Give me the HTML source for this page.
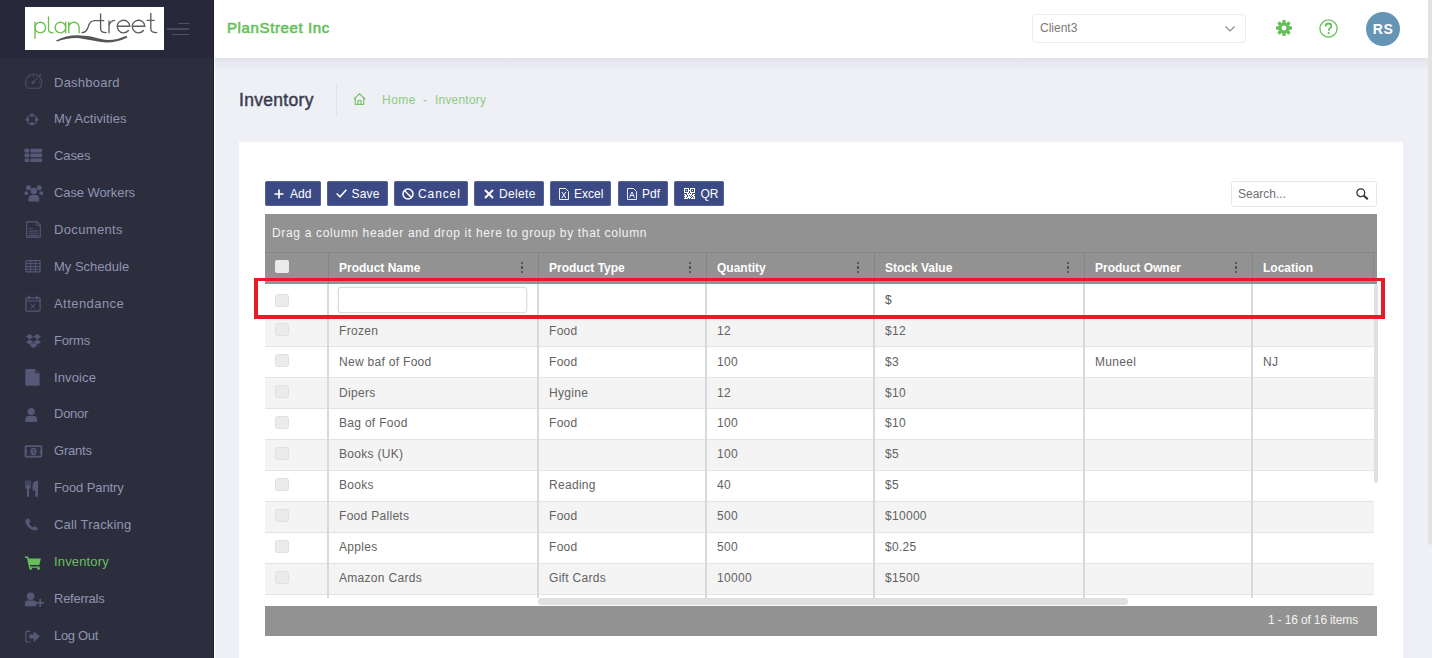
<!DOCTYPE html>
<html><head><meta charset="utf-8">
<style>
*{margin:0;padding:0;box-sizing:border-box}
html,body{width:1432px;height:658px;overflow:hidden;font-family:"Liberation Sans",sans-serif}
body{background:#eff0f6;position:relative}
.abs{position:absolute}
.logo{left:25px;top:7px;width:139px;height:43px;background:#fff}
.mi{position:absolute;left:54px;font-size:13px;white-space:nowrap;line-height:16px}
.ic{position:absolute;line-height:0}
.ic svg{display:block}
.btn{position:absolute;top:181px;height:25px;background:#3b4a84;border-radius:2.5px;box-shadow:inset 0 0 0 1px #55629a;color:#fff;font-size:12px;line-height:25px;white-space:nowrap}
.btn span{position:absolute;top:1px}
</style></head><body>
<div class="abs" style="left:0;top:0;width:214px;height:658px;background:#2c2e3e"></div>
<div class="abs" style="left:0;top:0;width:214px;height:58px;background:#27293a"></div>
<div class="abs" style="left:213px;top:0;width:1px;height:658px;background:#1d1e2b"></div>
<div class="abs logo"></div>
<svg class="abs" style="left:0;top:0" width="170" height="58" viewBox="0 0 170 58">
<g fill="none" stroke="#6abf4b" stroke-width="1.35" stroke-linecap="round">
<path d="M35 22.2 V38.3"/><circle cx="40.3" cy="27.5" r="5.3"/>
<path d="M48.5 17 V29.5 Q48.5 32.8 53.2 32.8"/>
<circle cx="60.4" cy="27.5" r="5.3"/><path d="M65.7 22.2 V32.8"/>
<path d="M68.7 22.2 V32.8 M68.7 27.4 A5.2 5.2 0 0 1 79.1 27.4 V32.8"/>
</g>
<g fill="none" stroke="#5c5c5c" stroke-width="1.35" stroke-linecap="round">
<path d="M82 32.6 C86.5 32.5 87.5 29 88.3 26.5 C89.3 22.5 91 20.6 95 20.6 L103.8 20.6"/>
<path d="M100.6 13.8 V29 Q100.6 32.6 106.2 32.6"/>
<path d="M109 20.8 V32.8 M109 26 Q110 20.6 114.5 20.4"/>
<path d="M117.2 26.2 H129.8 A6.3 6.3 0 1 0 128.4 30.5"/>
<path d="M132.2 26.2 H144.8 A6.3 6.3 0 1 0 143.4 30.5"/>
<path d="M150.8 13.5 V29 Q150.8 32.6 156.7 32.6 M147.2 20.4 H154.1"/>
</g>
<path d="M56 40.6 Q66 35.2 78 35.3 Q90 35.6 101 39.1 Q113 41.9 126.4 35.8 L127.4 37.4 Q114 43.9 101 42.1 Q90 39.7 78 37.9 Q66 37.7 57.2 41.4 Z" fill="#555"/>
</svg>
<svg class="abs" style="left:167px;top:23px" width="23" height="13" viewBox="0 0 23 13"><g stroke="#4e5169"><line x1="11" y1="0.5" x2="22" y2="0.5" stroke-width="1"/><line x1="0" y1="6" x2="22" y2="6" stroke-width="1.7"/><line x1="5" y1="11.5" x2="22" y2="11.5" stroke-width="1"/></g></svg>

<svg class="abs" style="left:0;top:0" width="214" height="658" viewBox="0 0 214 658">
<g fill="none" stroke="#4a4e6a" stroke-width="1.1">
 <path d="M27.6 88.3 A8.2 8.2 0 1 1 39.4 88.3 Z"/>
 <path d="M33.5 76 V77.6 M26.6 82 H28.2 M38.8 82 H40.4 M28.6 77.1 L29.6 78.1" stroke-width="1"/>
 <path d="M33.3 82.3 L37.3 77.8" stroke-width="1.1"/>
 <path d="M38.6 76.6 L41.2 74" stroke-width="1.1"/>
</g>
<circle cx="33.2" cy="82.4" r="1.2" fill="none" stroke="#555977" stroke-width="1"/>
<!-- My Activities -->
<circle cx="32" cy="119.6" r="4.9" fill="none" stroke="#555977" stroke-width="1.1"/>
<g fill="#555977">
 <path d="M32 112.9 Q33.6 114.3 33.6 115.6 Q33.6 117 32 117.2 Q30.4 117 30.4 115.6 Q30.4 114.3 32 112.9Z"/>
 <path d="M32 126.3 Q33.6 124.9 33.6 123.6 Q33.6 122.2 32 122 Q30.4 122.2 30.4 123.6 Q30.4 124.9 32 126.3Z"/>
 <path d="M25.1 119.6 Q26.5 118 27.8 118 Q29.2 118 29.4 119.6 Q29.2 121.2 27.8 121.2 Q26.5 121.2 25.1 119.6Z"/>
 <path d="M38.9 119.6 Q37.5 118 36.2 118 Q34.8 118 34.6 119.6 Q34.8 121.2 36.2 121.2 Q37.5 121.2 38.9 119.6Z"/>
</g>
<!-- Cases -->
<g fill="#555977">
 <rect x="24.6" y="148.8" width="4.6" height="3.6" rx="0.6"/><rect x="30.4" y="148.8" width="11.6" height="3.6" rx="0.6"/>
 <rect x="24.6" y="153.6" width="4.6" height="3.6" rx="0.6"/><rect x="30.4" y="153.6" width="11.6" height="3.6" rx="0.6"/>
 <rect x="24.6" y="158.4" width="4.6" height="3.6" rx="0.6"/><rect x="30.4" y="158.4" width="11.6" height="3.6" rx="0.6"/>
</g>
<!-- Case Workers -->
<g fill="#555977">
 <circle cx="28.5" cy="187.8" r="2.5"/><circle cx="39.2" cy="187.8" r="2.5"/>
 <circle cx="26.4" cy="193.2" r="1.9"/><circle cx="41.3" cy="193.2" r="1.9"/>
 <circle cx="33.8" cy="191" r="3.3"/>
 <path d="M28.5 201.5 V198.5 Q28.5 194.8 33.8 194.8 Q39.1 194.8 39.1 198.5 V201.5 Z"/>
</g>
<!-- Documents -->
<path d="M26.6 221.9 H37 L40.3 225.2 V237.1 H26.6 Z" fill="none" stroke="#555977" stroke-width="1.1"/>
<path d="M36.6 221.9 V225.6 H40.3" fill="none" stroke="#555977" stroke-width="0.9"/>
<g stroke="#555977" stroke-width="0.9"><path d="M28.6 228.6 H33 M28.6 231 H38.3 M28.6 233.3 H38.3 M28.6 235.5 H38.3"/></g>
<!-- My Schedule -->
<rect x="25.9" y="260.6" width="14.2" height="11.2" rx="1" fill="none" stroke="#555977" stroke-width="1.2"/>
<path d="M25.9 263.6 H40.1 M25.9 266.5 H40.1 M25.9 269.2 H40.1 M30.6 260.6 V271.8 M35.3 260.6 V271.8" stroke="#555977" stroke-width="1"/>
<!-- Attendance -->
<rect x="25.9" y="297.8" width="14.2" height="13.3" rx="1" fill="none" stroke="#555977" stroke-width="1.2"/>
<path d="M25.9 301 H40.1" stroke="#555977" stroke-width="1"/>
<path d="M29 295.5 V299.5 M37 295.5 V299.5" stroke="#555977" stroke-width="1.4"/>
<path d="M30.6 304 L35.4 308.6 M35.4 304 L30.6 308.6" stroke="#555977" stroke-width="1"/>
<!-- Forms dropbox -->
<g fill="#555977">
 <path d="M30 334 L26 336.6 L29.6 339.4 L33.4 336.8 Z"/>
 <path d="M37 334 L41 336.6 L37.4 339.4 L33.6 336.8 Z"/>
 <path d="M26 342.2 L30 344.8 L33.4 342 L29.6 339.4 Z"/>
 <path d="M41 342.2 L37 344.8 L33.6 342 L37.4 339.4 Z"/>
 <path d="M30 345.6 L33.5 348.3 L37 345.6 L37 344.9 L33.5 342.8 L30 344.9 Z"/>
</g>
<!-- Invoice -->
<path d="M25.3 369 H35 L39.6 373.6 V385.7 H25.3 Z" fill="#555977"/>
<path d="M35 369 V373.6 H39.6" fill="#3a3d52"/>
<!-- Donor -->
<g fill="#555977"><circle cx="31.2" cy="411.6" r="3.6"/><path d="M25.3 422 V419.4 Q25.3 416 28.6 416 H33.8 Q37.1 416 37.1 419.4 V422 Z"/></g>
<!-- Grants -->
<rect x="25.5" y="446.1" width="16" height="10.6" rx="0.6" fill="none" stroke="#555977" stroke-width="1.7"/>
<ellipse cx="33.5" cy="451.4" rx="3.1" ry="3.7" fill="#555977"/>
<path d="M33.7 449.4 V453.5 M32.8 450.1 L33.7 449.4" stroke="#2c2e3e" stroke-width="0.9" fill="none"/>
<path d="M26.2 448.6 Q28.6 451.4 26.2 454.2 Z M40.8 448.6 Q38.4 451.4 40.8 454.2 Z" fill="#555977"/>
<!-- Food Pantry -->
<g fill="#555977">
 <path d="M25.3 480.4 H26.5 V485.5 H27.4 V480.4 H28.6 V485.5 H29.5 V480.4 H30.7 V486.5 Q30.7 488.6 29 489 V496.8 H27 V489 Q25.3 488.6 25.3 486.5 Z"/>
 <path d="M38 480.4 V496.8 H35.3 V490.5 H32.6 V485.5 Q32.6 481 38 480.4 Z"/>
</g>
<!-- Call -->
<path d="M28.3 518.2 L30.6 521.8 L29.1 523.4 Q30.6 526.3 33.3 527.5 L34.8 526 L38 528.2 L36.6 530.4 Q31.3 530.8 27.4 526.2 Q24.6 522.6 25.5 519.8 Z" fill="#555977"/>
<!-- Inventory cart -->
<g fill="#67bf5b">
 <path d="M24.9 556.4 H28 L28.6 558.6 H40.9 L39.3 565 H29.8 L30.2 566.4 H39.6 V567.8 H29.1 L27 557.9 H24.9 Z"/>
 <circle cx="30.6" cy="568.6" r="1.3"/><circle cx="38.5" cy="568.6" r="1.3"/>
</g>
<!-- Referrals -->
<g fill="#555977">
 <circle cx="30.6" cy="596.2" r="3.8"/>
 <path d="M24.9 606.3 V603.6 Q24.9 600.6 28 600.6 H33.4 Q35.8 600.6 36.4 602 V606.3 Z"/>
 <path d="M39.3 598.8 H41.1 V601.9 H44 V603.7 H41.1 V606.8 H39.3 V603.7 H36.2 V601.9 H39.3 Z"/>
</g>
<!-- Log Out -->
<path d="M30.4 631.3 H27 Q25.9 631.3 25.9 632.4 V640.9 Q25.9 642 27 642 H30.4" fill="none" stroke="#555977" stroke-width="1.2"/>
<path d="M29.4 634.6 H33.6 V631 L39.8 636.6 L33.6 642.2 V638.6 H29.4 Z" fill="#555977"/>
</svg><div class="mi" style="top:74.5px;color:#9094b1;letter-spacing:0.25px">Dashboard</div>
<div class="mi" style="top:111.4px;color:#9094b1;letter-spacing:0.08px">My Activities</div>
<div class="mi" style="top:148.3px;color:#9094b1;letter-spacing:-0.1px">Cases</div>
<div class="mi" style="top:185.1px;color:#9094b1;letter-spacing:-0.09px">Case Workers</div>
<div class="mi" style="top:222.0px;color:#9094b1;letter-spacing:0.34px">Documents</div>
<div class="mi" style="top:258.9px;color:#9094b1;letter-spacing:0.0px">My Schedule</div>
<div class="mi" style="top:295.8px;color:#9094b1;letter-spacing:0.44px">Attendance</div>
<div class="mi" style="top:332.7px;color:#9094b1;letter-spacing:-0.15px">Forms</div>
<div class="mi" style="top:369.5px;color:#9094b1;letter-spacing:0.13px">Invoice</div>
<div class="mi" style="top:406.4px;color:#9094b1;letter-spacing:-0.25px">Donor</div>
<div class="mi" style="top:443.3px;color:#9094b1;letter-spacing:-0.2px">Grants</div>
<div class="mi" style="top:480.2px;color:#9094b1;letter-spacing:-0.1px">Food Pantry</div>
<div class="mi" style="top:517.1px;color:#9094b1;letter-spacing:0.17px">Call Tracking</div>
<div class="mi" style="top:553.9px;color:#67bf5b;letter-spacing:0.16px">Inventory</div>
<div class="mi" style="top:590.8px;color:#9094b1;letter-spacing:-0.25px">Referrals</div>
<div class="mi" style="top:627.7px;color:#9094b1;letter-spacing:-0.33px">Log Out</div>
<div class="abs" style="left:214px;top:0;width:1218px;height:58px;background:#fff"></div>
<div class="abs" style="left:215px;top:58px;width:1213px;height:12px;background:linear-gradient(#e2e3ea,#eff0f6)"></div>
<div class="abs" style="left:214px;top:58px;width:1px;height:600px;background:#fff"></div>
<div class="abs" style="left:1428px;top:0;width:4px;height:545px;background:#e2e2e2;border-radius:0 0 2px 2px"></div>

<div class="abs" style="left:227px;top:19px;font-size:15px;line-height:18px;font-weight:normal;-webkit-text-stroke:0.6px #67bf5b;color:#67bf5b;white-space:nowrap;letter-spacing:0.62px">PlanStreet Inc</div>
<div class="abs" style="left:1032px;top:14px;width:214px;height:29px;border:1px solid #eaebf0;border-radius:4px;background:#fff"></div>
<div class="abs" style="left:1040px;top:20px;font-size:12px;line-height:16px;color:#7a7a7a;white-space:nowrap">Client3</div>
<svg class="abs" style="left:1225px;top:26px" width="10" height="6" viewBox="0 0 10 6"><path d="M0.5 0.5 L5 5 L9.5 0.5" fill="none" stroke="#888" stroke-width="1.1"/></svg>
<svg class="abs" style="left:1276px;top:20px" width="16" height="16" viewBox="0 0 16 16"><g fill="#67bf5b"><circle cx="8" cy="8" r="5.6"/>
<rect x="6.3" y="0" width="3.4" height="16" rx="1"/><rect x="6.3" y="0" width="3.4" height="16" rx="1" transform="rotate(45 8 8)"/><rect x="6.3" y="0" width="3.4" height="16" rx="1" transform="rotate(90 8 8)"/><rect x="6.3" y="0" width="3.4" height="16" rx="1" transform="rotate(135 8 8)"/></g><circle cx="8" cy="8" r="2.4" fill="#fff"/></svg>
<svg class="abs" style="left:1319px;top:19px" width="19" height="19" viewBox="0 0 19 19"><circle cx="9.5" cy="9.5" r="8.6" fill="none" stroke="#67bf5b" stroke-width="1.3"/><path d="M6.7 7.4 Q6.7 4.5 9.5 4.5 Q12.3 4.5 12.3 7 Q12.3 8.6 10.6 9.5 Q9.7 10.1 9.7 11.7" fill="none" stroke="#67bf5b" stroke-width="1.8"/><circle cx="9.7" cy="14.1" r="1.1" fill="#67bf5b"/></svg>
<div class="abs" style="left:1366px;top:12px;width:34px;height:34px;border-radius:50%;background:#6595b4;color:#fff;font-weight:bold;font-size:14px;line-height:34px;text-align:center;letter-spacing:0.5px">RS</div>


<div class="abs" style="left:239px;top:89.5px;font-size:17.5px;line-height:20px;font-weight:normal;-webkit-text-stroke:0.5px #3b3e50;color:#3b3e50;letter-spacing:0.3px;white-space:nowrap">Inventory</div>
<div class="abs" style="left:336px;top:84px;width:1px;height:33px;background:#e2e4ec"></div>
<svg class="abs" style="left:353px;top:93px" width="13" height="12" viewBox="0 0 13 12"><path d="M0.8 6 L6.5 0.8 L12.2 6 M2.3 4.8 L2.3 11.3 L10.7 11.3 L10.7 4.8 M5 11.3 L5 7.5 L8 7.5 L8 11.3" fill="none" stroke="#7cc36c" stroke-width="1.2"/></svg>
<div class="abs" style="left:382px;top:93px;font-size:12px;line-height:14px;color:#8ccc7e;white-space:nowrap;letter-spacing:0.5px">Home</div>
<div class="abs" style="left:423px;top:93px;font-size:12px;line-height:14px;color:#8ccc7e">-</div>
<div class="abs" style="left:435px;top:93px;font-size:12px;line-height:14px;color:#8ccc7e;white-space:nowrap;letter-spacing:0.2px">Inventory</div>

<div class="abs" style="left:239px;top:142px;width:1164px;height:530px;background:#fff"></div>
<div class="btn" style="left:265px;width:56px"><div class="abs" style="left:9px;top:0;height:25px;display:flex;align-items:center"><svg width="10" height="10" viewBox="0 0 10 10"><path d="M5 0.5 L5 9.5 M0.5 5 L9.5 5" stroke="#fff" stroke-width="1.7"/></svg></div><span style="left:25px;letter-spacing:0px">Add</span></div>
<div class="btn" style="left:327px;width:61px"><div class="abs" style="left:9px;top:0;height:25px;display:flex;align-items:center"><svg width="11" height="9" viewBox="0 0 11 9"><path d="M0.7 4.5 L4 7.8 L10.3 0.8" fill="none" stroke="#fff" stroke-width="1.6"/></svg></div><span style="left:24.5px;letter-spacing:0.15px">Save</span></div>
<div class="btn" style="left:394px;width:74px"><div class="abs" style="left:8px;top:0;height:25px;display:flex;align-items:center"><svg width="12" height="12" viewBox="0 0 12 12"><circle cx="6" cy="6" r="5" fill="none" stroke="#fff" stroke-width="1.5"/><path d="M2.5 2.5 L9.5 9.5" stroke="#fff" stroke-width="1.5"/></svg></div><span style="left:24px;letter-spacing:0.9px">Cancel</span></div>
<div class="btn" style="left:474px;width:70px"><div class="abs" style="left:10px;top:0;height:25px;display:flex;align-items:center"><svg width="10" height="10" viewBox="0 0 10 10"><path d="M1 1 L9 9 M9 1 L1 9" stroke="#fff" stroke-width="2"/></svg></div><span style="left:25px;letter-spacing:0.35px">Delete</span></div>
<div class="btn" style="left:550px;width:61px"><div class="abs" style="left:9px;top:0;height:25px;display:flex;align-items:center"><svg width="10" height="12" viewBox="0 0 10 12"><path d="M0.5 0.5 L6.5 0.5 L9.5 3.5 L9.5 11.5 L0.5 11.5Z" fill="none" stroke="#fff" stroke-width="0.9"/><path d="M2.8 4 L6.8 10 M6.8 4 L2.8 10" stroke="#fff" stroke-width="1"/></svg></div><span style="left:24px;letter-spacing:0px">Excel</span></div>
<div class="btn" style="left:618px;width:50px"><div class="abs" style="left:9px;top:0;height:25px;display:flex;align-items:center"><svg width="10" height="12" viewBox="0 0 10 12"><path d="M0.5 0.5 L6.5 0.5 L9.5 3.5 L9.5 11.5 L0.5 11.5Z" fill="none" stroke="#fff" stroke-width="0.9"/><path d="M2.5 9.5 L5 4 L7.5 9.5 M3.5 7.5 L6.5 7.5" fill="none" stroke="#fff" stroke-width="0.9"/></svg></div><span style="left:24px;letter-spacing:0px">Pdf</span></div>
<div class="btn" style="left:674px;width:50px"><div class="abs" style="left:10px;top:0;height:25px;display:flex;align-items:center"><svg width="11" height="11" viewBox="0 0 11 11"><g fill="#fff"><rect x="0" y="0" width="1.02" height="1.02"/><rect x="1" y="0" width="1.02" height="1.02"/><rect x="2" y="0" width="1.02" height="1.02"/><rect x="3" y="0" width="1.02" height="1.02"/><rect x="4" y="0" width="1.02" height="1.02"/><rect x="6" y="0" width="1.02" height="1.02"/><rect x="7" y="0" width="1.02" height="1.02"/><rect x="8" y="0" width="1.02" height="1.02"/><rect x="9" y="0" width="1.02" height="1.02"/><rect x="10" y="0" width="1.02" height="1.02"/><rect x="0" y="1" width="1.02" height="1.02"/><rect x="4" y="1" width="1.02" height="1.02"/><rect x="6" y="1" width="1.02" height="1.02"/><rect x="10" y="1" width="1.02" height="1.02"/><rect x="0" y="2" width="1.02" height="1.02"/><rect x="2" y="2" width="1.02" height="1.02"/><rect x="4" y="2" width="1.02" height="1.02"/><rect x="5" y="2" width="1.02" height="1.02"/><rect x="6" y="2" width="1.02" height="1.02"/><rect x="8" y="2" width="1.02" height="1.02"/><rect x="10" y="2" width="1.02" height="1.02"/><rect x="0" y="3" width="1.02" height="1.02"/><rect x="4" y="3" width="1.02" height="1.02"/><rect x="6" y="3" width="1.02" height="1.02"/><rect x="10" y="3" width="1.02" height="1.02"/><rect x="0" y="4" width="1.02" height="1.02"/><rect x="1" y="4" width="1.02" height="1.02"/><rect x="2" y="4" width="1.02" height="1.02"/><rect x="3" y="4" width="1.02" height="1.02"/><rect x="4" y="4" width="1.02" height="1.02"/><rect x="6" y="4" width="1.02" height="1.02"/><rect x="7" y="4" width="1.02" height="1.02"/><rect x="8" y="4" width="1.02" height="1.02"/><rect x="9" y="4" width="1.02" height="1.02"/><rect x="10" y="4" width="1.02" height="1.02"/><rect x="3" y="5" width="1.02" height="1.02"/><rect x="5" y="5" width="1.02" height="1.02"/><rect x="7" y="5" width="1.02" height="1.02"/><rect x="0" y="6" width="1.02" height="1.02"/><rect x="1" y="6" width="1.02" height="1.02"/><rect x="3" y="6" width="1.02" height="1.02"/><rect x="4" y="6" width="1.02" height="1.02"/><rect x="5" y="6" width="1.02" height="1.02"/><rect x="6" y="6" width="1.02" height="1.02"/><rect x="7" y="6" width="1.02" height="1.02"/><rect x="9" y="6" width="1.02" height="1.02"/><rect x="10" y="6" width="1.02" height="1.02"/><rect x="1" y="7" width="1.02" height="1.02"/><rect x="2" y="7" width="1.02" height="1.02"/><rect x="4" y="7" width="1.02" height="1.02"/><rect x="6" y="7" width="1.02" height="1.02"/><rect x="8" y="7" width="1.02" height="1.02"/><rect x="9" y="7" width="1.02" height="1.02"/><rect x="0" y="8" width="1.02" height="1.02"/><rect x="1" y="8" width="1.02" height="1.02"/><rect x="2" y="8" width="1.02" height="1.02"/><rect x="4" y="8" width="1.02" height="1.02"/><rect x="5" y="8" width="1.02" height="1.02"/><rect x="7" y="8" width="1.02" height="1.02"/><rect x="9" y="8" width="1.02" height="1.02"/><rect x="10" y="8" width="1.02" height="1.02"/><rect x="1" y="9" width="1.02" height="1.02"/><rect x="3" y="9" width="1.02" height="1.02"/><rect x="4" y="9" width="1.02" height="1.02"/><rect x="5" y="9" width="1.02" height="1.02"/><rect x="6" y="9" width="1.02" height="1.02"/><rect x="8" y="9" width="1.02" height="1.02"/><rect x="10" y="9" width="1.02" height="1.02"/><rect x="0" y="10" width="1.02" height="1.02"/><rect x="1" y="10" width="1.02" height="1.02"/><rect x="2" y="10" width="1.02" height="1.02"/><rect x="3" y="10" width="1.02" height="1.02"/><rect x="5" y="10" width="1.02" height="1.02"/><rect x="7" y="10" width="1.02" height="1.02"/><rect x="8" y="10" width="1.02" height="1.02"/><rect x="9" y="10" width="1.02" height="1.02"/><rect x="10" y="10" width="1.02" height="1.02"/></g></svg></div><span style="left:26.5px;letter-spacing:0px">QR</span></div>

<div class="abs" style="left:1231px;top:181px;width:146px;height:26px;border:1px solid #e8e8e8;border-radius:3px;background:#fff"></div>
<div class="abs" style="left:1238px;top:186px;font-size:12px;line-height:16px;color:#707070;white-space:nowrap">Search...</div>
<svg class="abs" style="left:1356px;top:188px" width="13" height="12" viewBox="0 0 13 12"><circle cx="4.8" cy="4.8" r="3.9" fill="none" stroke="#333" stroke-width="1.3"/><path d="M7.6 7.4 L11.8 11.3" stroke="#333" stroke-width="2"/></svg>

<div class="abs" style="left:265px;top:214px;width:1112px;height:70px;background:#929292"></div>
<div class="abs" style="left:265px;top:252px;width:1112px;height:1px;background:#858585"></div>
<div class="abs" style="left:272px;top:225px;font-size:12px;line-height:16px;color:#f3f3f3;white-space:nowrap;letter-spacing:0.66px">Drag a column header and drop it here to group by that column</div>
<div class="abs" style="left:275px;top:260px;width:14px;height:13px;background:#ebebeb;border-radius:2px"></div>
<div class="abs" style="left:328px;top:253px;width:1px;height:31px;background:#848484"></div>
<div class="abs" style="left:339px;top:260px;font-size:12px;line-height:16px;font-weight:bold;color:#fff;white-space:nowrap">Product Name</div>
<div class="abs" style="left:520.5px;top:261.8px;width:2.6px;height:2.6px;border-radius:50%;background:#444"></div>
<div class="abs" style="left:520.5px;top:266.3px;width:2.6px;height:2.6px;border-radius:50%;background:#444"></div>
<div class="abs" style="left:520.5px;top:270.8px;width:2.6px;height:2.6px;border-radius:50%;background:#444"></div>
<div class="abs" style="left:538px;top:253px;width:1px;height:31px;background:#848484"></div>
<div class="abs" style="left:549px;top:260px;font-size:12px;line-height:16px;font-weight:bold;color:#fff;white-space:nowrap">Product Type</div>
<div class="abs" style="left:688.5px;top:261.8px;width:2.6px;height:2.6px;border-radius:50%;background:#444"></div>
<div class="abs" style="left:688.5px;top:266.3px;width:2.6px;height:2.6px;border-radius:50%;background:#444"></div>
<div class="abs" style="left:688.5px;top:270.8px;width:2.6px;height:2.6px;border-radius:50%;background:#444"></div>
<div class="abs" style="left:706px;top:253px;width:1px;height:31px;background:#848484"></div>
<div class="abs" style="left:717px;top:260px;font-size:12px;line-height:16px;font-weight:bold;color:#fff;white-space:nowrap">Quantity</div>
<div class="abs" style="left:856.5px;top:261.8px;width:2.6px;height:2.6px;border-radius:50%;background:#444"></div>
<div class="abs" style="left:856.5px;top:266.3px;width:2.6px;height:2.6px;border-radius:50%;background:#444"></div>
<div class="abs" style="left:856.5px;top:270.8px;width:2.6px;height:2.6px;border-radius:50%;background:#444"></div>
<div class="abs" style="left:874px;top:253px;width:1px;height:31px;background:#848484"></div>
<div class="abs" style="left:885px;top:260px;font-size:12px;line-height:16px;font-weight:bold;color:#fff;white-space:nowrap">Stock Value</div>
<div class="abs" style="left:1066.5px;top:261.8px;width:2.6px;height:2.6px;border-radius:50%;background:#444"></div>
<div class="abs" style="left:1066.5px;top:266.3px;width:2.6px;height:2.6px;border-radius:50%;background:#444"></div>
<div class="abs" style="left:1066.5px;top:270.8px;width:2.6px;height:2.6px;border-radius:50%;background:#444"></div>
<div class="abs" style="left:1084px;top:253px;width:1px;height:31px;background:#848484"></div>
<div class="abs" style="left:1095px;top:260px;font-size:12px;line-height:16px;font-weight:bold;color:#fff;white-space:nowrap">Product Owner</div>
<div class="abs" style="left:1234.5px;top:261.8px;width:2.6px;height:2.6px;border-radius:50%;background:#444"></div>
<div class="abs" style="left:1234.5px;top:266.3px;width:2.6px;height:2.6px;border-radius:50%;background:#444"></div>
<div class="abs" style="left:1234.5px;top:270.8px;width:2.6px;height:2.6px;border-radius:50%;background:#444"></div>
<div class="abs" style="left:1252px;top:253px;width:1px;height:31px;background:#848484"></div>
<div class="abs" style="left:1263px;top:260px;font-size:12px;line-height:16px;font-weight:bold;color:#fff;white-space:nowrap">Location</div>
<div class="abs" style="left:1373px;top:253px;width:1px;height:31px;background:#858585"></div>
<div class="abs" style="left:265px;top:284px;width:1109px;height:314px;background:#fff;overflow:hidden">
<div class="abs" style="left:0;top:0px;width:1109px;height:32px;background:#fff;border-bottom:1px solid #e4e4e4"></div>
<div class="abs" style="left:10px;top:10px;width:14px;height:13px;background:#ebebeb;border:1px solid #e0e0e0;border-radius:2.5px"></div>
<div class="abs" style="left:73px;top:3px;width:189px;height:26px;border:1px solid #dcdcdc;border-radius:3px;background:#fff;box-shadow:0 0 1.5px #d0d0d0"></div>
<div class="abs" style="left:620px;top:8px;font-size:12px;line-height:16px;color:#5a5a5a">$</div>
<div class="abs" style="left:0;top:32px;width:1109px;height:31px;background:#f4f4f4;border-bottom:1px solid #e4e4e4"></div>
<div class="abs" style="left:10px;top:39px;width:14px;height:13px;background:#ebebeb;border:1px solid #e0e0e0;border-radius:2.5px"></div>
<div class="abs" style="left:74px;top:39px;font-size:12px;line-height:16px;color:#626262;white-space:nowrap;letter-spacing:0.3px">Frozen</div>
<div class="abs" style="left:284px;top:39px;font-size:12px;line-height:16px;color:#626262;white-space:nowrap;letter-spacing:0.3px">Food</div>
<div class="abs" style="left:452px;top:39px;font-size:12px;line-height:16px;color:#626262;white-space:nowrap;letter-spacing:0.3px">12</div>
<div class="abs" style="left:620px;top:39px;font-size:12px;line-height:16px;color:#626262;white-space:nowrap;letter-spacing:0.3px">$12</div>
<div class="abs" style="left:0;top:63px;width:1109px;height:31px;background:#fff;border-bottom:1px solid #e4e4e4"></div>
<div class="abs" style="left:10px;top:70px;width:14px;height:13px;background:#ebebeb;border:1px solid #e0e0e0;border-radius:2.5px"></div>
<div class="abs" style="left:74px;top:70px;font-size:12px;line-height:16px;color:#626262;white-space:nowrap;letter-spacing:0.3px">New baf of Food</div>
<div class="abs" style="left:284px;top:70px;font-size:12px;line-height:16px;color:#626262;white-space:nowrap;letter-spacing:0.3px">Food</div>
<div class="abs" style="left:452px;top:70px;font-size:12px;line-height:16px;color:#626262;white-space:nowrap;letter-spacing:0.3px">100</div>
<div class="abs" style="left:620px;top:70px;font-size:12px;line-height:16px;color:#626262;white-space:nowrap;letter-spacing:0.3px">$3</div>
<div class="abs" style="left:830px;top:70px;font-size:12px;line-height:16px;color:#626262;white-space:nowrap;letter-spacing:0.3px">Muneel</div>
<div class="abs" style="left:998px;top:70px;font-size:12px;line-height:16px;color:#626262;white-space:nowrap;letter-spacing:0.3px">NJ</div>
<div class="abs" style="left:0;top:94px;width:1109px;height:31px;background:#f4f4f4;border-bottom:1px solid #e4e4e4"></div>
<div class="abs" style="left:10px;top:101px;width:14px;height:13px;background:#ebebeb;border:1px solid #e0e0e0;border-radius:2.5px"></div>
<div class="abs" style="left:74px;top:101px;font-size:12px;line-height:16px;color:#626262;white-space:nowrap;letter-spacing:0.3px">Dipers</div>
<div class="abs" style="left:284px;top:101px;font-size:12px;line-height:16px;color:#626262;white-space:nowrap;letter-spacing:0.3px">Hygine</div>
<div class="abs" style="left:452px;top:101px;font-size:12px;line-height:16px;color:#626262;white-space:nowrap;letter-spacing:0.3px">12</div>
<div class="abs" style="left:620px;top:101px;font-size:12px;line-height:16px;color:#626262;white-space:nowrap;letter-spacing:0.3px">$10</div>
<div class="abs" style="left:0;top:125px;width:1109px;height:31px;background:#fff;border-bottom:1px solid #e4e4e4"></div>
<div class="abs" style="left:10px;top:132px;width:14px;height:13px;background:#ebebeb;border:1px solid #e0e0e0;border-radius:2.5px"></div>
<div class="abs" style="left:74px;top:131px;font-size:12px;line-height:16px;color:#626262;white-space:nowrap;letter-spacing:0.3px">Bag of Food</div>
<div class="abs" style="left:284px;top:131px;font-size:12px;line-height:16px;color:#626262;white-space:nowrap;letter-spacing:0.3px">Food</div>
<div class="abs" style="left:452px;top:131px;font-size:12px;line-height:16px;color:#626262;white-space:nowrap;letter-spacing:0.3px">100</div>
<div class="abs" style="left:620px;top:131px;font-size:12px;line-height:16px;color:#626262;white-space:nowrap;letter-spacing:0.3px">$10</div>
<div class="abs" style="left:0;top:156px;width:1109px;height:31px;background:#f4f4f4;border-bottom:1px solid #e4e4e4"></div>
<div class="abs" style="left:10px;top:163px;width:14px;height:13px;background:#ebebeb;border:1px solid #e0e0e0;border-radius:2.5px"></div>
<div class="abs" style="left:74px;top:162px;font-size:12px;line-height:16px;color:#626262;white-space:nowrap;letter-spacing:0.3px">Books (UK)</div>
<div class="abs" style="left:452px;top:162px;font-size:12px;line-height:16px;color:#626262;white-space:nowrap;letter-spacing:0.3px">100</div>
<div class="abs" style="left:620px;top:162px;font-size:12px;line-height:16px;color:#626262;white-space:nowrap;letter-spacing:0.3px">$5</div>
<div class="abs" style="left:0;top:187px;width:1109px;height:31px;background:#fff;border-bottom:1px solid #e4e4e4"></div>
<div class="abs" style="left:10px;top:194px;width:14px;height:13px;background:#ebebeb;border:1px solid #e0e0e0;border-radius:2.5px"></div>
<div class="abs" style="left:74px;top:193px;font-size:12px;line-height:16px;color:#626262;white-space:nowrap;letter-spacing:0.3px">Books</div>
<div class="abs" style="left:284px;top:193px;font-size:12px;line-height:16px;color:#626262;white-space:nowrap;letter-spacing:0.3px">Reading</div>
<div class="abs" style="left:452px;top:193px;font-size:12px;line-height:16px;color:#626262;white-space:nowrap;letter-spacing:0.3px">40</div>
<div class="abs" style="left:620px;top:193px;font-size:12px;line-height:16px;color:#626262;white-space:nowrap;letter-spacing:0.3px">$5</div>
<div class="abs" style="left:0;top:218px;width:1109px;height:31px;background:#f4f4f4;border-bottom:1px solid #e4e4e4"></div>
<div class="abs" style="left:10px;top:225px;width:14px;height:13px;background:#ebebeb;border:1px solid #e0e0e0;border-radius:2.5px"></div>
<div class="abs" style="left:74px;top:224px;font-size:12px;line-height:16px;color:#626262;white-space:nowrap;letter-spacing:0.3px">Food Pallets</div>
<div class="abs" style="left:284px;top:224px;font-size:12px;line-height:16px;color:#626262;white-space:nowrap;letter-spacing:0.3px">Food</div>
<div class="abs" style="left:452px;top:224px;font-size:12px;line-height:16px;color:#626262;white-space:nowrap;letter-spacing:0.3px">500</div>
<div class="abs" style="left:620px;top:224px;font-size:12px;line-height:16px;color:#626262;white-space:nowrap;letter-spacing:0.3px">$10000</div>
<div class="abs" style="left:0;top:249px;width:1109px;height:31px;background:#fff;border-bottom:1px solid #e4e4e4"></div>
<div class="abs" style="left:10px;top:256px;width:14px;height:13px;background:#ebebeb;border:1px solid #e0e0e0;border-radius:2.5px"></div>
<div class="abs" style="left:74px;top:255px;font-size:12px;line-height:16px;color:#626262;white-space:nowrap;letter-spacing:0.3px">Apples</div>
<div class="abs" style="left:284px;top:255px;font-size:12px;line-height:16px;color:#626262;white-space:nowrap;letter-spacing:0.3px">Food</div>
<div class="abs" style="left:452px;top:255px;font-size:12px;line-height:16px;color:#626262;white-space:nowrap;letter-spacing:0.3px">500</div>
<div class="abs" style="left:620px;top:255px;font-size:12px;line-height:16px;color:#626262;white-space:nowrap;letter-spacing:0.3px">$0.25</div>
<div class="abs" style="left:0;top:280px;width:1109px;height:31px;background:#f4f4f4;border-bottom:1px solid #e4e4e4"></div>
<div class="abs" style="left:10px;top:287px;width:14px;height:13px;background:#ebebeb;border:1px solid #e0e0e0;border-radius:2.5px"></div>
<div class="abs" style="left:74px;top:286px;font-size:12px;line-height:16px;color:#626262;white-space:nowrap;letter-spacing:0.3px">Amazon Cards</div>
<div class="abs" style="left:284px;top:286px;font-size:12px;line-height:16px;color:#626262;white-space:nowrap;letter-spacing:0.3px">Gift Cards</div>
<div class="abs" style="left:452px;top:286px;font-size:12px;line-height:16px;color:#626262;white-space:nowrap;letter-spacing:0.3px">10000</div>
<div class="abs" style="left:620px;top:286px;font-size:12px;line-height:16px;color:#626262;white-space:nowrap;letter-spacing:0.3px">$1500</div>
<div class="abs" style="left:0;top:311px;width:1109px;height:10px;background:#fff"></div>
<div class="abs" style="left:62px;top:0;width:2px;height:314px;background:#d9d9d9"></div>
<div class="abs" style="left:272px;top:0;width:2px;height:314px;background:#d9d9d9"></div>
<div class="abs" style="left:440px;top:0;width:2px;height:314px;background:#d9d9d9"></div>
<div class="abs" style="left:608px;top:0;width:2px;height:314px;background:#d9d9d9"></div>
<div class="abs" style="left:818px;top:0;width:2px;height:314px;background:#d9d9d9"></div>
<div class="abs" style="left:986px;top:0;width:2px;height:314px;background:#d9d9d9"></div>
</div>
<div class="abs" style="left:1374px;top:284px;width:4px;height:199px;background:#e0e0e0;border-radius:2px"></div>
<div class="abs" style="left:538px;top:598px;width:590px;height:7px;background:#e0e0e0;border-radius:3.5px"></div>
<div class="abs" style="left:265px;top:606px;width:1112px;height:30px;background:#929292"></div>
<div class="abs" style="left:1268px;top:612px;font-size:12px;line-height:16px;color:#f3f3f3;white-space:nowrap;letter-spacing:-0.15px">1 - 16 of 16 items</div>
<div class="abs" style="left:254px;top:278px;width:1131px;height:41px;border:4px solid #e81a23;border-top-width:3.5px;border-bottom-width:4px"></div>
</body></html>
